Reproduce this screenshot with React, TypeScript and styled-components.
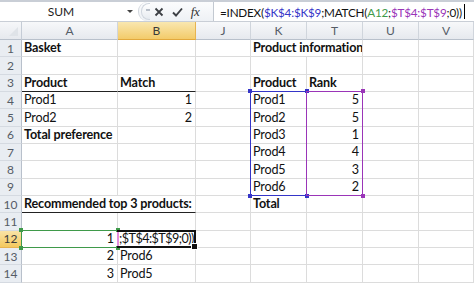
import React from 'react'
import styled, { createGlobalStyle } from 'styled-components'

const GlobalStyle = createGlobalStyle`
  body {
    margin: 0;
    background: #ffffff;
    overflow: hidden;
    font-family: Lato, 'Liberation Sans', sans-serif;
  }
`

const ROW_H = 17.35
const COL_LETTERS = ['A', 'B', 'J', 'K', 'T', 'U', 'V']
const TEMPLATE_COLS = '22px 96px 78px 55px 56px 56px 56px 1fr'
const TEMPLATE_ROWS = `18px repeat(14, ${ROW_H}px)`

const BLUE = '#3535c8'
const GREEN = '#3f9a4a'
const PURPLE = '#9a35b8'

// ---------- formula bar ----------

const FormulaBar = styled.div`
  display: flex;
  align-items: stretch;
  height: 19px;
  border-top: 2px solid #c9ced6;
  border-bottom: 1px solid #c9ced6;
  background: #ffffff;
`

const NameBox = styled.div`
  width: 122px;
  display: flex;
  align-items: center;
  justify-content: center;
  font-size: 12px;
  color: #222;
`

const DropArrow = styled.div`
  width: 16px;
  display: flex;
  align-items: center;
  justify-content: center;

  &::after {
    content: '';
    border-left: 3px solid transparent;
    border-right: 3px solid transparent;
    border-top: 3px solid #444;
  }
`

const ButtonGroup = styled.div`
  width: 74px;
  display: flex;
  align-items: center;
  background: linear-gradient(#fbfcfd, #eef1f5);
  border-left: 1px solid #d3d8df;
  border-right: 1px solid #c3c9d1;
  border-radius: 9px 0 0 9px;
`

const Grip = styled.div`
  width: 8px;
  height: 15px;
  margin-left: 2px;
  border-radius: 8px 0 0 8px;
  border: 1px solid #d0d6de;
  border-right: none;
  background: linear-gradient(#ffffff, #e7ebf0);
  position: relative;

  &::after {
    content: '';
    position: absolute;
    left: 4px;
    top: 5px;
    width: 4px;
    height: 2px;
    background: #b7bec8;
  }
`

const IconSlot = styled.div`
  width: 18px;
  display: flex;
  align-items: center;
  justify-content: center;
`

const Fx = styled.span`
  font-family: 'Liberation Serif', serif;
  font-style: italic;
  font-size: 13px;
  color: #333;
  letter-spacing: -0.5px;
`

const FormulaInput = styled.div`
  flex: 1;
  display: flex;
  align-items: center;
  padding-left: 6px;
  font-size: 11.7px;
  letter-spacing: -0.2px;
  color: #111;
  white-space: pre;
  overflow: hidden;
`

const Ref = styled.span<{ $color: string }>`
  color: ${p => p.$color};
`

const Caret = styled.span`
  display: inline-block;
  width: 1px;
  height: 15px;
  margin-left: 2px;
  background: #000;
`

// ---------- sheet ----------

const Sheet = styled.div`
  display: grid;
`

const Layer = styled.div`
  grid-area: 1 / 1;
  display: grid;
  grid-template-columns: ${TEMPLATE_COLS};
  grid-template-rows: ${TEMPLATE_ROWS};
`

const OverlayLayer = styled(Layer)`
  pointer-events: none;
  z-index: 2;
`

const Corner = styled.div`
  background: linear-gradient(#f6f7f9, #e6e9ee);
  border-right: 1px solid #c5ccd6;
  border-bottom: 1px solid #b8c0cb;
  position: relative;

  &::after {
    content: '';
    position: absolute;
    right: 3px;
    bottom: 3px;
    border-left: 9px solid transparent;
    border-bottom: 9px solid #dfe3e8;
  }
`

const ColHead = styled.div<{ $active?: boolean }>`
  display: flex;
  align-items: center;
  justify-content: center;
  font-size: 12px;
  color: ${p => (p.$active ? '#3a3a3a' : '#555c66')};
  background: ${p =>
    p.$active
      ? 'linear-gradient(#f9e7b0, #f3cb6a)'
      : 'linear-gradient(#f7f8fa, #e6e9ee)'};
  border-right: 1px solid ${p => (p.$active ? '#e7b450' : '#d0d5dc')};
  border-bottom: 1px solid ${p => (p.$active ? '#e2a93d' : '#b8c0cb')};
`

const RowHead = styled.div<{ $active?: boolean }>`
  display: flex;
  align-items: center;
  justify-content: center;
  font-size: 12px;
  color: ${p => (p.$active ? '#3a3a3a' : '#555c66')};
  background: ${p =>
    p.$active ? 'linear-gradient(#f9e3a6, #f3c95f)' : '#e9edf2'};
  border-right: 1px solid ${p => (p.$active ? '#e2a93d' : '#b8c0cb')};
  border-bottom: 1px solid ${p => (p.$active ? '#e7b450' : '#d5dae1')};
`

const Cell = styled.div<{
  $span?: number
  $bold?: boolean
  $right?: boolean
  $underline?: boolean
  $editing?: boolean
}>`
  grid-column: span ${p => p.$span || 1};
  display: flex;
  align-items: flex-end;
  justify-content: ${p => (p.$right ? 'flex-end' : 'flex-start')};
  padding: 0 3px 0 ${p => (p.$editing ? 1 : 2)}px;
  font-size: 12.6px;
  line-height: 16px;
  letter-spacing: ${p => (p.$editing ? -0.55 : -0.15)}px;
  font-weight: ${p => (p.$bold ? 700 : 400)};
  color: #111;
  white-space: nowrap;
  overflow: hidden;
  border-right: 1px solid #dcdcdc;
  border-bottom: ${p => (p.$underline ? '1.5px solid #222' : '1px solid #dcdcdc')};
`

const Range = styled.div<{
  $c1: number
  $c2: number
  $r1: number
  $r2: number
  $color: string
  $width?: number
}>`
  grid-column: ${p => p.$c1} / ${p => p.$c2};
  grid-row: ${p => p.$r1} / ${p => p.$r2};
  border: ${p => p.$width || 1}px solid ${p => p.$color};
  margin: -1px 0 0 -1px;
  position: relative;
`

const Handle = styled.span<{ $color: string; $x: 'l' | 'r'; $y: 't' | 'b' }>`
  position: absolute;
  width: 4px;
  height: 4px;
  background: ${p => p.$color};
  ${p => (p.$x === 'l' ? 'left: -3px;' : 'right: -3px;')}
  ${p => (p.$y === 't' ? 'top: -3px;' : 'bottom: -3px;')}
`

const EditBar = styled.span`
  position: absolute;
  left: -2px;
  top: 0;
  bottom: 0;
  width: 2px;
  background: #e58ee0;
`

const FillHandle = styled.span`
  position: absolute;
  right: -4px;
  bottom: -4px;
  width: 5px;
  height: 5px;
  background: #111;
  border: 1px solid #fff;
`

type CellData = {
  text?: string
  bold?: boolean
  right?: boolean
  span?: number
  underline?: boolean
  editing?: boolean
}

const rows: Record<number, (CellData | null)[]> = {
  1: [{ text: 'Basket', bold: true }, {}, {}, { text: 'Product information', bold: true, span: 2 }, null, {}, {}],
  3: [
    { text: 'Product', bold: true, underline: true },
    { text: 'Match', bold: true, underline: true },
    {},
    { text: 'Product', bold: true },
    { text: 'Rank', bold: true },
    {},
    {},
  ],
  4: [{ text: 'Prod1' }, { text: '1', right: true }, {}, { text: 'Prod1' }, { text: '5', right: true }, {}, {}],
  5: [{ text: 'Prod2' }, { text: '2', right: true }, {}, { text: 'Prod2' }, { text: '5', right: true }, {}, {}],
  6: [{ text: 'Total preference', bold: true }, {}, {}, { text: 'Prod3' }, { text: '1', right: true }, {}, {}],
  7: [{}, {}, {}, { text: 'Prod4' }, { text: '4', right: true }, {}, {}],
  8: [{}, {}, {}, { text: 'Prod5' }, { text: '3', right: true }, {}, {}],
  9: [{}, {}, {}, { text: 'Prod6' }, { text: '2', right: true }, {}, {}],
  10: [
    { text: 'Recommended top 3 products:', bold: true, span: 2, underline: true },
    null,
    {},
    { text: 'Total', bold: true },
    {},
    {},
    {},
  ],
  12: [{ text: '1', right: true }, { text: ';$T$4:$T$9;0))', editing: true }, {}, {}, {}, {}, {}],
  13: [{ text: '2', right: true }, { text: 'Prod6' }, {}, {}, {}, {}, {}],
  14: [{ text: '3', right: true }, { text: 'Prod5' }, {}, {}, {}, {}, {}],
}

const emptyRow: CellData[] = COL_LETTERS.map(() => ({}))

const XIcon = () => (
  <svg width='10' height='10' viewBox='0 0 10 10'>
    <path d='M1.5 1.5 L8.5 8.5 M8.5 1.5 L1.5 8.5' stroke='#3c3f44' strokeWidth='1.8' />
  </svg>
)

const CheckIcon = () => (
  <svg width='11' height='10' viewBox='0 0 11 10'>
    <path d='M1 5.5 L4 8.5 L10 1.5' stroke='#3c3f44' strokeWidth='1.9' fill='none' />
  </svg>
)

export default function App() {
  return (
    <>
      <GlobalStyle />
      <FormulaBar>
        <NameBox>SUM</NameBox>
        <DropArrow />
        <ButtonGroup>
          <Grip />
          <IconSlot>
            <XIcon />
          </IconSlot>
          <IconSlot>
            <CheckIcon />
          </IconSlot>
          <IconSlot>
            <Fx>fx</Fx>
          </IconSlot>
        </ButtonGroup>
        <FormulaInput>
          =INDEX(<Ref $color={BLUE}>$K$4:$K$9</Ref>;MATCH(<Ref $color={GREEN}>A12</Ref>;<Ref $color={PURPLE}>$T$4:$T$9</Ref>;0))
          <Caret />
        </FormulaInput>
      </FormulaBar>
      <Sheet>
        <Layer>
          <Corner />
          {COL_LETTERS.map(c => (
            <ColHead key={c} $active={c === 'B'}>
              {c}
            </ColHead>
          ))}
          {Array.from({ length: 14 }, (_, i) => i + 1).map(r => (
            <React.Fragment key={r}>
              <RowHead $active={r === 12}>{r}</RowHead>
              {(rows[r] || emptyRow).map((cell, ci) =>
                cell === null ? null : (
                  <Cell
                    key={ci}
                    $span={cell.span}
                    $bold={cell.bold}
                    $right={cell.right}
                    $underline={cell.underline}
                    $editing={cell.editing}
                  >
                    {cell.text}
                  </Cell>
                )
              )}
            </React.Fragment>
          ))}
        </Layer>

        {/* range highlights while the formula is edited */}
        <OverlayLayer>
          <Range $c1={5} $c2={6} $r1={5} $r2={11} $color={BLUE}>
            <Handle $color={BLUE} $x='l' $y='t' />
            <Handle $color={BLUE} $x='r' $y='t' />
            <Handle $color={BLUE} $x='l' $y='b' />
            <Handle $color={BLUE} $x='r' $y='b' />
          </Range>
          <Range $c1={6} $c2={7} $r1={5} $r2={11} $color={PURPLE}>
            <Handle $color={PURPLE} $x='r' $y='t' />
            <Handle $color={PURPLE} $x='r' $y='b' />
          </Range>
          <Range $c1={2} $c2={3} $r1={13} $r2={14} $color={GREEN}>
            <Handle $color={GREEN} $x='l' $y='t' />
            <Handle $color={GREEN} $x='r' $y='t' />
            <Handle $color={GREEN} $x='l' $y='b' />
            <Handle $color={GREEN} $x='r' $y='b' />
          </Range>
          <Range $c1={3} $c2={4} $r1={13} $r2={14} $color='#111' $width={2}>
            <EditBar />
            <FillHandle />
          </Range>
        </OverlayLayer>
      </Sheet>
    </>
  )
}
